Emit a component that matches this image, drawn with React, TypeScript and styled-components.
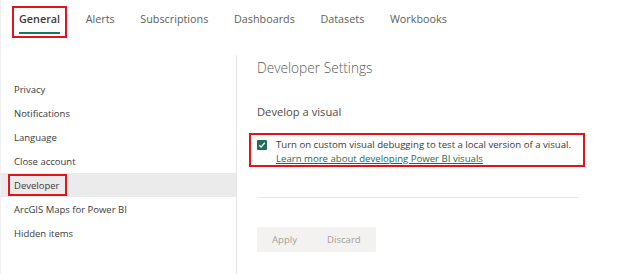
import React from "react";
import styled, { createGlobalStyle } from "styled-components";

const Global = createGlobalStyle`
  html, body { margin: 0; padding: 0; background: #ffffff; }
  body { font-family: "Open Sans", "Noto Sans", Arial, sans-serif; }
  * { box-sizing: border-box; }
`;

const Page = styled.div`
  width: 624px;
  height: 274px;
  background: #ffffff;
  display: flex;
  flex-direction: column;
  overflow: hidden;
  border-left: 1px solid #f0f0f0;
`;

const TabBar = styled.nav`
  height: 55px;
  display: flex;
  align-items: flex-start;
  gap: 25.6px;
  padding: 8px 0 0 18px;
`;

const Tab = styled.div<{ $active?: boolean }>`
  position: relative;
  height: 28px;
  line-height: 22px;
  font-size: 10.8px;
  white-space: nowrap;
  color: ${(p) => (p.$active ? "#3b3a39" : "#605e5c")};
  font-weight: ${(p) => (p.$active ? 600 : 400)};
  &::after {
    content: "";
    display: ${(p) => (p.$active ? "block" : "none")};
    position: absolute;
    left: 0;
    right: 0;
    bottom: 2px;
    height: 2px;
    background: #117865;
  }
`;

const TabMark = styled.div`
  display: flex;
  border: 2px solid #e3131b;
  padding: 0 5px;
  margin: -2px -7px;
`;

const Body = styled.div`
  flex: 1;
  display: grid;
  grid-template-columns: 236px 1fr;
`;

const Sidebar = styled.aside`
  border-right: 1px solid #e6e6e6;
  padding-top: 22px;
  display: flex;
  flex-direction: column;
`;

const NavItem = styled.div<{ $active?: boolean }>`
  height: 24px;
  display: flex;
  align-items: center;
  padding-left: 13px;
  font-size: 9.5px;
  color: #3b3a39;
  background: ${(p) => (p.$active ? "#ebebeb" : "transparent")};
`;

const NavMark = styled.span`
  display: flex;
  align-items: center;
  height: 22px;
  border: 2px solid #e3131b;
  padding: 0 6px 0 4px;
  margin-left: -6px;
`;

const Content = styled.main`
  padding: 4px 0 0 20px;
  display: flex;
  flex-direction: column;
  width: 342px;
`;

const Title = styled.h1`
  margin: 0;
  font-size: 13.7px;
  line-height: 18px;
  font-weight: 300;
  color: #5c5b5a;
`;

const Section = styled.h2`
  margin: 27px 0 0 0;
  font-size: 11.2px;
  line-height: 16px;
  font-weight: 400;
  color: #4d4c4b;
`;

const OptionMark = styled.div`
  margin: 13px 0 0 -8px;
  width: 336px;
  height: 34px;
  border: 2px solid #e3131b;
  display: flex;
  align-items: flex-start;
  padding: 3px 0 0 6px;
  gap: 9px;
`;

const Check = styled.span`
  flex: none;
  width: 10px;
  height: 10px;
  margin-top: 2px;
  background: #1f6e58;
  border-radius: 1px;
  display: flex;
  align-items: center;
  justify-content: center;
`;

const OptionText = styled.div`
  display: flex;
  flex-direction: column;
  font-size: 9.6px;
  line-height: 14px;
  color: #3b3a39;
`;

const Link = styled.a`
  color: #1a6b5c;
  text-decoration: underline;
  text-underline-offset: 1px;
`;

const Rule = styled.hr`
  margin: 30px 0 0 0;
  width: 322px;
  border: none;
  border-top: 1px solid #e8e8e8;
`;

const Buttons = styled.div`
  margin-top: 29px;
  display: flex;
`;

const Button = styled.button`
  height: 25px;
  padding: 0 15px;
  border: none;
  background: #f3f2f1;
  color: #a19f9d;
  font-family: inherit;
  font-size: 9.6px;
`;

export default function App() {
  return (
    <>
      <Global />
      <Page>
        <TabBar>
          <TabMark>
            <Tab $active>General</Tab>
          </TabMark>
          <Tab>Alerts</Tab>
          <Tab>Subscriptions</Tab>
          <Tab>Dashboards</Tab>
          <Tab>Datasets</Tab>
          <Tab>Workbooks</Tab>
        </TabBar>
        <Body>
          <Sidebar>
            <NavItem>Privacy</NavItem>
            <NavItem>Notifications</NavItem>
            <NavItem>Language</NavItem>
            <NavItem>Close account</NavItem>
            <NavItem $active>
              <NavMark>Developer</NavMark>
            </NavItem>
            <NavItem>ArcGIS Maps for Power BI</NavItem>
            <NavItem>Hidden items</NavItem>
          </Sidebar>
          <Content>
            <Title>Developer Settings</Title>
            <Section>Develop a visual</Section>
            <OptionMark>
              <Check>
                <svg width="8" height="8" viewBox="0 0 8 8">
                  <path d="M1.3 4.2 L3.1 6 L6.8 1.8" fill="none" stroke="#fff" strokeWidth="1.3" />
                </svg>
              </Check>
              <OptionText>
                <span>Turn on custom visual debugging to test a local version of a visual.</span>
                <Link href="#">Learn more about developing Power BI visuals</Link>
              </OptionText>
            </OptionMark>
            <Rule />
            <Buttons>
              <Button>Apply</Button>
              <Button>Discard</Button>
            </Buttons>
          </Content>
        </Body>
      </Page>
    </>
  );
}
